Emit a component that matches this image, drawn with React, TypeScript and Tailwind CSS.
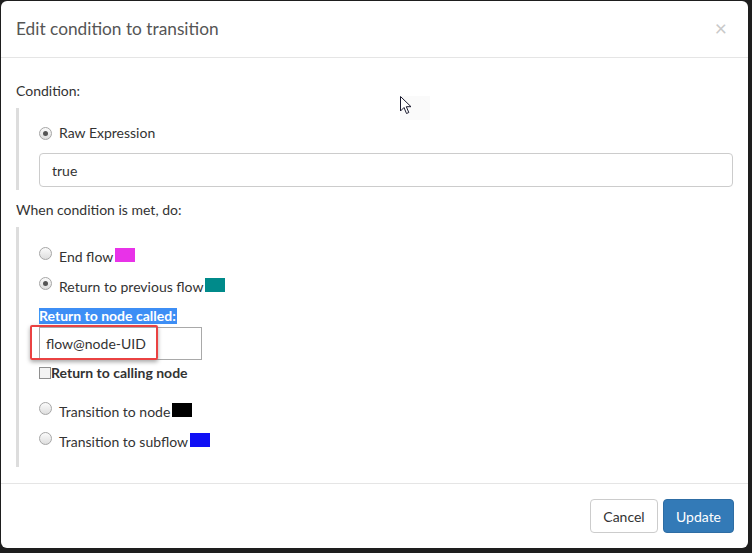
import React from 'react';

type RowProps = {
    label: string;
    swatch?: string;
    checked?: boolean;
};

const Radio: React.FC<{ checked?: boolean }> = ({ checked }) => (
    <span className="w-[13px] h-[13px] rounded-full border border-[#a6a6a6] bg-gradient-to-b from-[#fbfbfb] to-[#dedede] flex items-center justify-center flex-shrink-0">
        {checked && <span className="w-[5px] h-[5px] rounded-full bg-[#555]" />}
    </span>
);

const OptionRow: React.FC<RowProps> = ({ label, swatch, checked }) => (
    <div className="flex items-start gap-[7px] h-[20px]">
        <Radio checked={checked} />
        <span className="leading-[20px]">
            {label}
            {swatch && <span className={`inline-block w-[20px] h-[14px] ml-[2px] ${swatch}`} />}
        </span>
    </div>
);

const App: React.FC = () => {
    return (
        <div className="w-[752px] h-[553px] bg-[#1e1e1e] pt-[1px] pl-[1px] overflow-hidden relative font-['Lato','Liberation_Sans',sans-serif] text-[14px] text-[#333]">
            <div className="w-[747px] h-[547px] bg-white rounded-[6px] flex flex-col">
                {/* Header */}
                <div className="h-[57px] border-b border-[#e5e5e5] px-[15px] flex items-center justify-between">
                    <h4 className="text-[17.3px] leading-[26px] text-[#555]">Edit condition to transition</h4>
                    <button className="text-[21px] leading-none text-[#c9c9c9] mr-[6px] -mt-[3px]">×</button>
                </div>

                {/* Body */}
                <div className="px-[15px] pt-[23px] pb-[16px]">
                    <div className="leading-[20px]">Condition:</div>
                    <div className="mt-[7px] border-l-[3px] border-[#dddddd] pl-[20px] pt-[15px] pb-[3px]">
                        <div className="flex items-center gap-[7px] h-[20px]">
                            <Radio checked />
                            <span className="leading-[20px]">Raw Expression</span>
                        </div>
                        <div className="mt-[10px] h-[34px] border border-[#cccccc] rounded-[4px] px-[12px] flex items-center">
                            true
                        </div>
                    </div>

                    <div className="mt-[10px] leading-[20px]">When condition is met, do:</div>
                    <div className="mt-[7px] border-l-[3px] border-[#dddddd] pl-[20px] pt-[20px] pb-[15px]">
                        <OptionRow label="End flow" swatch="bg-[#e832e8]" />
                        <div className="mt-[10px]">
                            <OptionRow label="Return to previous flow" swatch="bg-[#008a8a]" checked />
                        </div>
                        <div className="mt-[11px] h-[16px] flex">
                            <span className="bg-[#3d8ef5] text-white font-bold leading-[16px] pr-[1px]">Return to node called:</span>
                        </div>
                        <div className="mt-[3px] relative w-[163px]">
                            <div className="h-[33px] border border-[#a9a9a9] pl-[6px] flex items-center">flow@node-UID</div>
                            <div className="absolute left-[-9px] top-[-2px] w-[128px] h-[35px] border-[2.5px] border-[#ea4242] rounded-[2px] shadow-[0_2px_4px_rgba(0,0,0,0.35)]" />
                        </div>
                        <div className="mt-[3px] flex items-center h-[20px]">
                            <span className="w-[12px] h-[12px] border border-[#8f8f8f] bg-[#f3f3f3] flex-shrink-0" />
                            <span className="font-bold leading-[20px]">Return to calling node</span>
                        </div>
                        <div className="mt-[19px]">
                            <OptionRow label="Transition to node" swatch="bg-black" />
                        </div>
                        <div className="mt-[10px]">
                            <OptionRow label="Transition to subflow" swatch="bg-[#1010f5]" />
                        </div>
                    </div>
                </div>

                {/* Footer */}
                <div className="border-t border-[#e5e5e5] px-[14px] py-[15px] flex justify-end gap-[5px]">
                    <button className="h-[34px] w-[68px] border border-[#cccccc] rounded-[4px] bg-white text-[#333]">Cancel</button>
                    <button className="h-[34px] w-[71px] border border-[#2e6da4] rounded-[4px] bg-[#337ab7] text-white">Update</button>
                </div>
            </div>

            {/* mouse cursor */}
            <div className="absolute left-[400px] top-[96px] w-[30px] h-[24px] bg-[#fafafa]">
                <svg width="12" height="19" viewBox="0 0 12 19" className="absolute left-0 top-0">
                    <path d="M0.5 0.5 L0.5 15 L4 11.5 L6.5 17.5 L8.8 16.5 L6.3 10.7 L11 10.7 Z" fill="white" stroke="#1a1a2e" strokeWidth="1" strokeLinejoin="round" />
                </svg>
            </div>
        </div>
    );
};

export default App;
